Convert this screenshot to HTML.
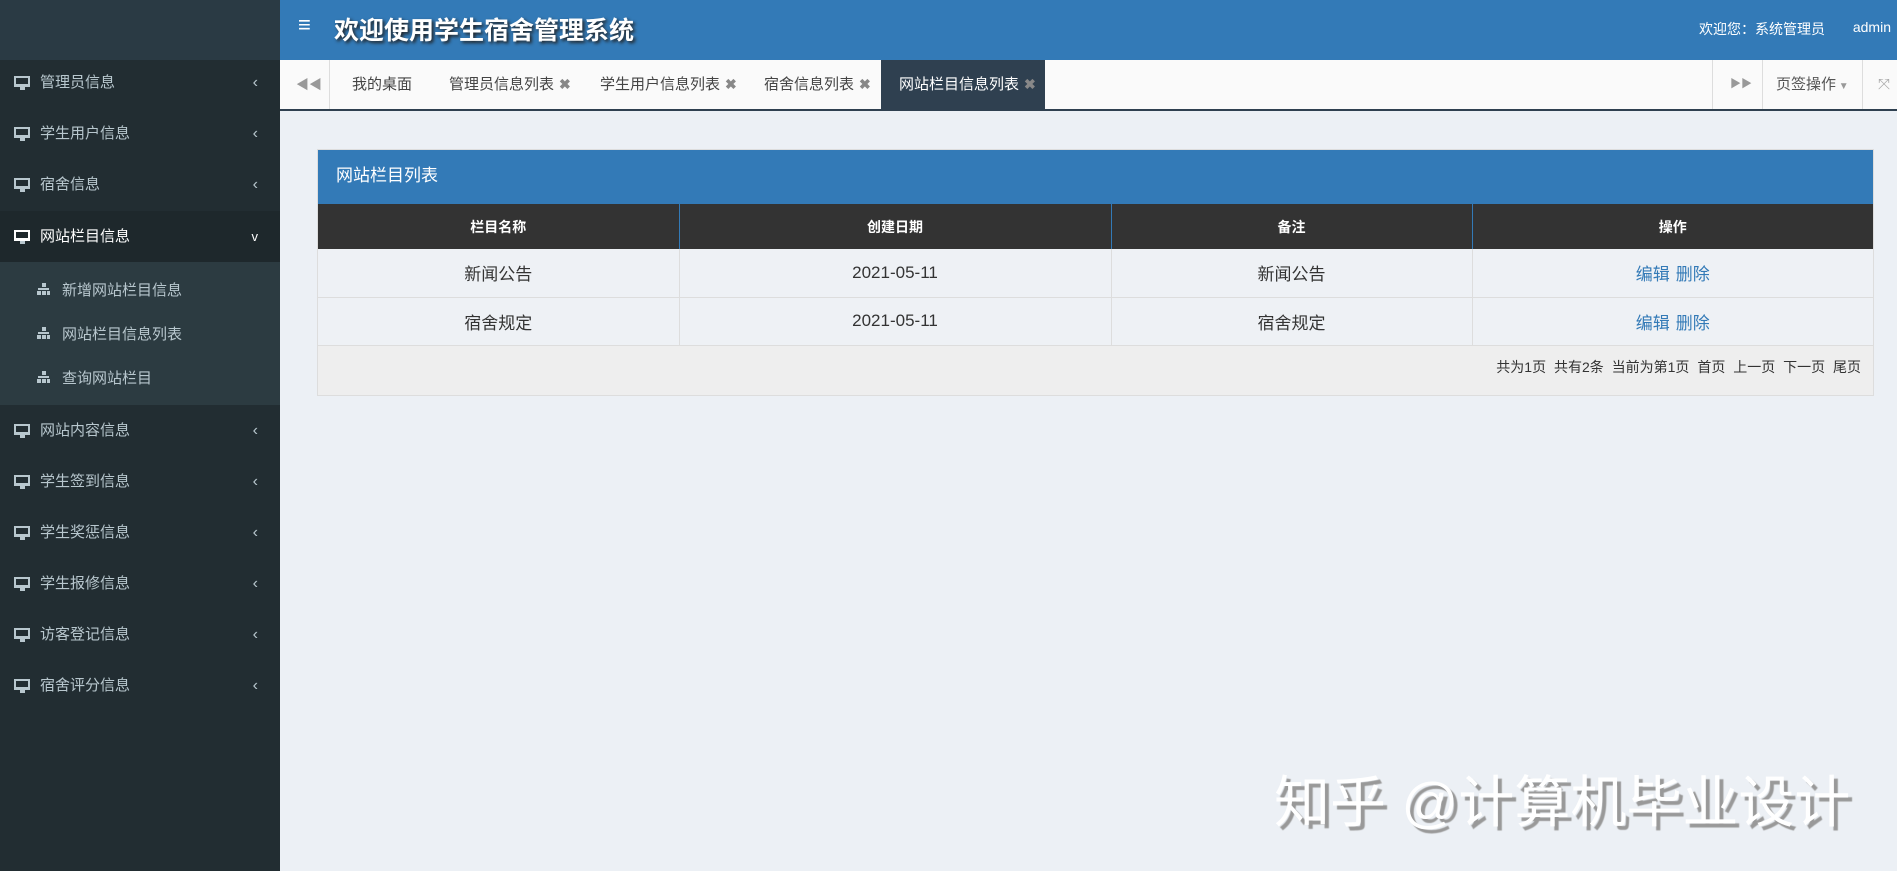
<!DOCTYPE html>
<html><head><meta charset="utf-8">
<style>
*{margin:0;padding:0;box-sizing:border-box}
body{width:1897px;height:871px;overflow:hidden;background:#ecf0f5;font-family:"Liberation Sans","Noto Sans CJK SC",sans-serif;position:relative}
.side{position:absolute;left:0;top:0;width:280px;height:871px;background:#222d32}
.logo{height:60px;background:#2a3a44}
.mi{position:absolute;left:0;width:280px;height:51px;color:#b8c7ce;font-size:15px;line-height:51px;padding-left:40px}
.mi .ic{position:absolute;left:14px;top:19px;width:16px;height:11px;border:2px solid #b8c7ce;border-bottom-width:3px}
.mi .ic:after{content:"";position:absolute;left:4px;top:9px;width:5px;height:3px;background:#b8c7ce}
.mi .ar{position:absolute;right:22px;top:0;font-size:16px}
.act{background:#1e282c;color:#fff}
.act .ic,.act .ic:after{border-color:#fff}
.sub{position:absolute;left:0;top:262px;width:280px;height:143px;background:#2c3b41}
.si{position:absolute;left:62px;color:#b8c7ce;font-size:15px}
.si:before{content:"";position:absolute;left:-25px;top:4px;width:13px;height:12px;background:
linear-gradient(#b8c7ce,#b8c7ce) 5px 0/4px 4px no-repeat,
linear-gradient(#b8c7ce,#b8c7ce) 0 8px/4px 4px no-repeat,
linear-gradient(#b8c7ce,#b8c7ce) 5px 8px/4px 4px no-repeat,
linear-gradient(#b8c7ce,#b8c7ce) 10px 8px/3px 4px no-repeat,
linear-gradient(#b8c7ce,#b8c7ce) 1px 5px/11px 2px no-repeat}
.hdr{position:absolute;left:280px;top:0;width:1617px;height:60px;background:#337ab7;color:#fff}
.hdr .t{position:absolute;left:54px;top:11px;font-size:25px;font-weight:bold;text-shadow:2px 2px 3px #222}
.hdr .m{position:absolute;left:18px;top:12px;font-size:22px;font-weight:bold}
.hdr .r{position:absolute;right:72px;top:19px;font-size:14px}
.hdr .a{position:absolute;right:6px;top:19px;font-size:14px}
.tabs{position:absolute;left:280px;top:60px;width:1617px;height:51px;background:#fafafa;border-bottom:2px solid #2f4050}
.tb{position:absolute;top:0;height:49px;line-height:49px;font-size:15px;color:#444}
.tb.ac{background:#2f4050;color:#fff}
.x{color:#888;font-weight:bold;margin-left:5px;font-size:14px}
.vl{position:absolute;top:0;width:1px;height:49px;background:#ddd}
.wrap{position:absolute;left:317px;top:149px;width:1557px;height:247px;border:1px solid #ddd;background:#eeeeee}
.ph{height:54px;background:#337ab7;color:#fff;font-size:17px;line-height:52px;padding-left:18px}
table{border-collapse:collapse;width:100%}
th{background:#333;color:#fff;height:45px;font-size:14px;border-left:1px solid #337ab7}
th:first-child{border-left:none}
td{height:48px;text-align:center;font-size:17px;color:#333;background:#eef1f5;border-left:1px solid #ddd;border-bottom:1px solid #ddd}
td:first-child{border-left:none}
td a{color:#337ab7;margin:0 3px}
.pg{position:absolute;right:12px;bottom:18px;font-size:14px;color:#333;word-spacing:4px}
.wm{position:absolute;left:1274px;top:758px;font-size:56px;color:#fff;text-shadow:4px 4px 1px #999;white-space:nowrap}
</style></head><body>
<div class="side">
<div class="logo"></div>
<div class="mi" style="top:57px"><i class="ic"></i>管理员信息<span class="ar">‹</span></div>
<div class="mi" style="top:108px"><i class="ic"></i>学生用户信息<span class="ar">‹</span></div>
<div class="mi" style="top:159px"><i class="ic"></i>宿舍信息<span class="ar">‹</span></div>
<div class="mi act" style="top:211px"><i class="ic"></i>网站栏目信息<span class="ar" style="font-size:13px">v</span></div>
<div class="sub">
<div class="si" style="top:17px">新增网站栏目信息</div>
<div class="si" style="top:61px">网站栏目信息列表</div>
<div class="si" style="top:105px">查询网站栏目</div>
</div>
<div class="mi" style="top:405px"><i class="ic"></i>网站内容信息<span class="ar">‹</span></div>
<div class="mi" style="top:456px"><i class="ic"></i>学生签到信息<span class="ar">‹</span></div>
<div class="mi" style="top:507px"><i class="ic"></i>学生奖惩信息<span class="ar">‹</span></div>
<div class="mi" style="top:558px"><i class="ic"></i>学生报修信息<span class="ar">‹</span></div>
<div class="mi" style="top:609px"><i class="ic"></i>访客登记信息<span class="ar">‹</span></div>
<div class="mi" style="top:660px"><i class="ic"></i>宿舍评分信息<span class="ar">‹</span></div>
</div>
<div class="hdr"><span class="m">≡</span><span class="t">欢迎使用学生宿舍管理系统</span><span class="r">欢迎您：系统管理员</span><span class="a">admin</span></div>
<div class="tabs">
<div class="tb" style="left:16px;color:#999;font-size:13px">◀◀</div>
<div class="vl" style="left:49px"></div>
<div class="tb" style="left:72px">我的桌面</div>
<div class="tb" style="left:169px">管理员信息列表<span class="x">✖</span></div>
<div class="tb" style="left:320px">学生用户信息列表<span class="x">✖</span></div>
<div class="tb" style="left:484px">宿舍信息列表<span class="x">✖</span></div>
<div class="tb ac" style="left:601px;width:164px;padding-left:18px">网站栏目信息列表<span class="x">✖</span></div>
<div class="vl" style="left:1432px"></div>
<div class="tb" style="left:1450px;color:#999;font-size:11px">▶▶</div>
<div class="vl" style="left:1482px"></div>
<div class="tb" style="left:1496px;color:#555">页签操作<span style="font-size:10px;color:#999"> ▼</span></div>
<div class="vl" style="left:1582px"></div>
<div class="tb" style="left:1598px;color:#aaa">⤧</div>
</div>
<div class="wrap">
<div class="ph">网站栏目列表</div>
<table>
<tr><th style="width:361px">栏目名称</th><th style="width:432px">创建日期</th><th style="width:361px">备注</th><th>操作</th></tr>
<tr><td>新闻公告</td><td>2021-05-11</td><td>新闻公告</td><td><a>编辑</a><a>删除</a></td></tr>
<tr><td>宿舍规定</td><td>2021-05-11</td><td>宿舍规定</td><td><a>编辑</a><a>删除</a></td></tr>
</table>
<div class="pg">共为1页 共有2条 当前为第1页 首页 上一页 下一页 尾页</div>
</div>
<div class="wm">知乎 @计算机毕业设计</div>
</body></html>
